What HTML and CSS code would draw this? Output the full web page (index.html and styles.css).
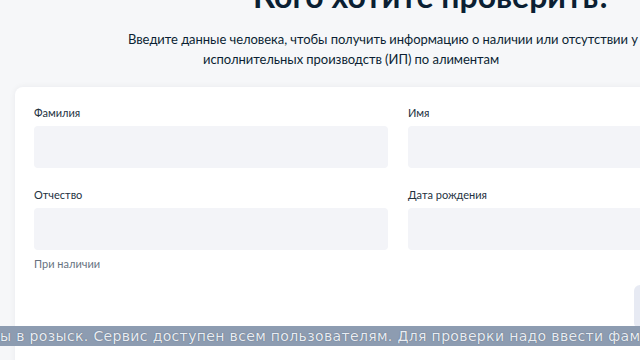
FILE: index.html
```html
<!DOCTYPE html>
<html lang="ru">
<head>
<meta charset="utf-8">
<link rel="stylesheet" href="styles.css">
</head>
<body>
<div class="page">
  <header class="intro">
    <h1 class="title">Кого хотите проверить?</h1>
    <p class="lead">
      <span class="lead-line lead-line-1">Введите данные человека, чтобы получить информацию о наличии или отсутствии у</span>
      <span class="lead-line lead-line-2">исполнительных производств (ИП) по алиментам</span>
    </p>
  </header>
  <section class="card">
    <div class="form-grid">
      <div class="field">
        <label class="label">Фамилия</label>
        <div class="input"></div>
      </div>
      <div class="field">
        <label class="label">Имя</label>
        <div class="input"></div>
      </div>
      <div class="field">
        <label class="label">Отчество</label>
        <div class="input"></div>
        <div class="hint">При наличии</div>
      </div>
      <div class="field">
        <label class="label">Дата рождения</label>
        <div class="input"></div>
      </div>
    </div>
    <div class="actions">
      <div class="button"></div>
    </div>
  </section>
</div>
<div class="subtitle">ы в розыск. Сервис доступен всем пользователям. Для проверки надо ввести фами</div>
</body>
</html>
```
FILE: styles.css
```css
html, body {
  margin: 0;
  padding: 0;
}
body {
  width: 640px;
  height: 360px;
  overflow: hidden;
  background: #f6f7f9;
  font-family: Lato, "Noto Sans", sans-serif;
  color: #0b1f33;
  position: relative;
}
.page {
  width: 640px;
}
.title {
  margin: -21px 0 0 0;
  font-size: 32px;
  line-height: 34px;
  font-weight: 700;
  white-space: nowrap;
  padding-left: 253px;
  color: #0b1f33;
}
.lead {
  margin: 16px 0 0 0;
  font-size: 13px;
  line-height: 20px;
  color: #0b1f33;
  white-space: nowrap;
  letter-spacing: -0.05px;
}
.lead-line {
  display: block;
}
.lead-line-1 {
  padding-left: 128px;
}
.lead-line-2 {
  padding-left: 203px;
}
.card {
  margin: 18px 0 0 15px;
  width: 800px;
  height: 300px;
  background: #ffffff;
  border-radius: 8px;
  box-shadow: 0 0 6px rgba(11, 31, 51, 0.06);
  padding: 19px 19px 0 19px;
  box-sizing: border-box;
}
.form-grid {
  display: grid;
  grid-template-columns: 354px 354px;
  column-gap: 20px;
  row-gap: 20px;
}
.field {
  display: flex;
  flex-direction: column;
}
.label {
  font-size: 11px;
  line-height: 14px;
  color: #24323f;
  margin-bottom: 6px;
}
.input {
  height: 42px;
  background: #f3f4f8;
  border-radius: 4px;
}
.hint {
  margin-top: 7px;
  font-size: 11px;
  line-height: 14px;
  color: #66727f;
}
.actions {
  margin-top: 14px;
  padding-left: 600px;
}
.button {
  width: 160px;
  height: 44px;
  background: #e7eaf3;
  border-radius: 6px;
}
.subtitle {
  position: absolute;
  left: 0;
  top: 326px;
  width: 640px;
  height: 20px;
  background: #8d9cb1;
  color: #e9edf3;
  font-family: "DejaVu Sans", sans-serif;
  font-size: 14px;
  line-height: 20px;
  white-space: nowrap;
  overflow: hidden;
  text-shadow: 0 0 1px #4b5a70;
  letter-spacing: 0.35px;
}
```
